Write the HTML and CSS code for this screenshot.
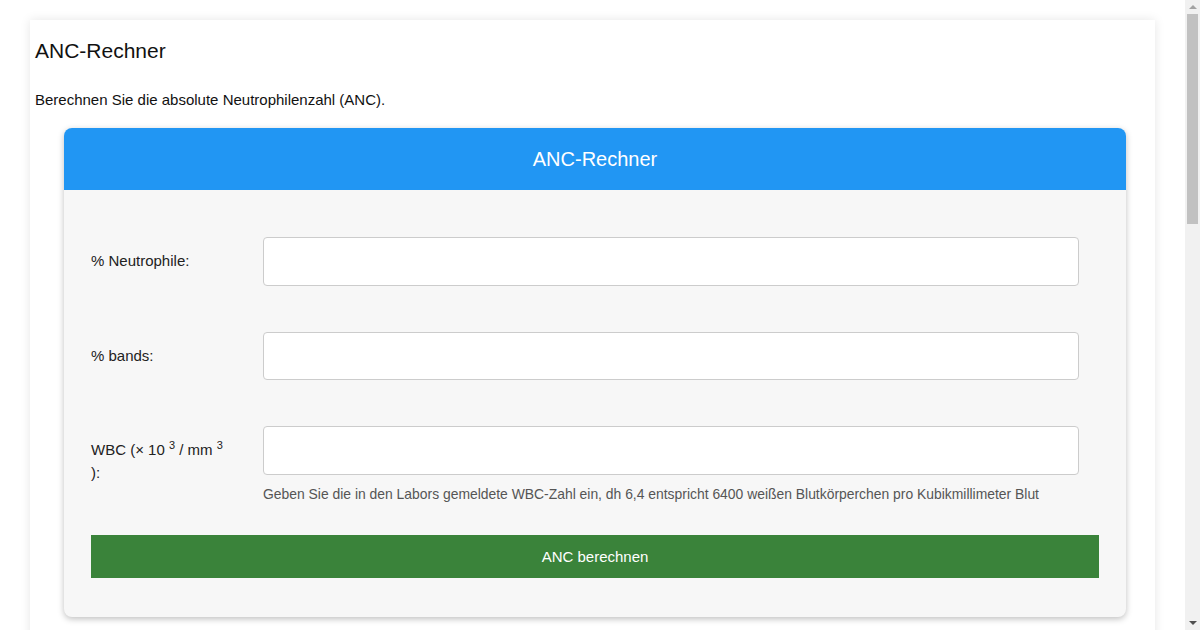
FILE: index.html
```html
<html lang="de">

<head>
    <meta charset="UTF-8">
    <meta name="viewport" content="width=device-width, initial-scale=1.0">
    <title>ANC-Rechner</title>
    <link rel="stylesheet" href="styles.css">
</head>

<body>
    <div class="page">
        <h1 class="page-title">ANC-Rechner</h1>
        <p class="intro">Berechnen Sie die absolute Neutrophilenzahl (ANC).</p>

        <div class="calc-card">
            <div class="calc-head">ANC-Rechner</div>
            <div class="calc-body">
                <div class="calc-row">
                    <label class="calc-label" for="neutro">% Neutrophile:</label>
                    <div class="calc-field">
                        <input id="neutro" class="calc-input" type="text">
                    </div>
                </div>
                <div class="calc-row">
                    <label class="calc-label" for="bands">% bands:</label>
                    <div class="calc-field">
                        <input id="bands" class="calc-input" type="text">
                    </div>
                </div>
                <div class="calc-row">
                    <label class="calc-label calc-label-tall" for="wbc">WBC (× 10 <sup>3</sup> / mm <sup>3</sup> ):</label>
                    <div class="calc-field">
                        <input id="wbc" class="calc-input" type="text">
                        <div class="calc-help">Geben Sie die in den Labors gemeldete WBC-Zahl ein, dh 6,4 entspricht 6400 weißen Blutkörperchen pro Kubikmillimeter Blut</div>
                    </div>
                </div>
                <button class="calc-btn" type="button">ANC berechnen</button>
            </div>
        </div>
    </div>

    <!-- page scrollbar as the browser shows it -->
    <div class="scrollbar">
        <span class="scroll-arrow up"></span>
        <div class="scroll-track"><div class="scroll-thumb"></div></div>
        <span class="scroll-arrow down"></span>
    </div>
</body>

</html>
```

FILE: styles.css
```css
body {
    margin: 0;
    padding: 0;
    background-color: #fff;
    font-family: "Liberation Sans", Arial, sans-serif;
    color: #111;
}

.page {
    width: 1125px;
    min-height: 1750px;
    margin: 20px 0 0 30px;
    padding: 5px;
    box-sizing: border-box;
    background-color: #fff;
    box-shadow: 0 0 10px rgba(0, 0, 0, .1);
}

.page-title {
    font-size: 21px;
    font-weight: normal;
    line-height: 24px;
    margin: 14px 0 28px;
}

.intro {
    font-size: 15px;
    line-height: 18px;
    margin: 0 0 19px;
}

.calc-card {
    margin: 0 24px 0 29px;
    border-radius: 8px;
    background-color: #f7f7f7;
    box-shadow: 0 2px 6px rgba(0, 0, 0, .25);
}

.calc-head {
    background-color: #2196f3;
    color: #fff;
    font-size: 20px;
    line-height: 24px;
    padding: 19px;
    text-align: center;
    border-radius: 8px 8px 0 0;
}

.calc-body {
    padding: 24px 27px 39px;
}

.calc-row {
    display: flex;
    align-items: center;
    padding: 23px 0;
}

.calc-label {
    flex: 0 0 172px;
    box-sizing: border-box;
    padding-right: 32px;
    padding-bottom: 1px;
    font-size: 15px;
    line-height: 23px;
    color: #222;
}

.calc-label-tall {
    padding-bottom: 8px;
}

.calc-label sup {
    font-size: 11px;
    line-height: 0;
}

.calc-field {
    flex: 1;
    margin-right: 20px;
}

.calc-input {
    display: block;
    width: 100%;
    height: 48.5px;
    box-sizing: border-box;
    border: 1px solid #ccc;
    border-radius: 4px;
    background-color: #fff;
    padding: 0 12px;
    font-size: 15px;
    font-family: inherit;
}

.calc-help {
    margin-top: 9px;
    font-size: 13.9px;
    line-height: 20px;
    color: #555;
}

.calc-btn {
    display: block;
    width: 100%;
    height: 43px;
    margin-top: 8px;
    border: none;
    background-color: #3a833a;
    color: #fff;
    font-size: 15px;
    font-family: inherit;
    cursor: pointer;
}

.scrollbar {
    position: fixed;
    top: 0;
    right: 0;
    bottom: 0;
    width: 15px;
    background-color: #f1f1f1;
    display: flex;
    flex-direction: column;
    align-items: center;
}

.scroll-track {
    flex: 1;
    width: 100%;
    padding: 0 2px;
    box-sizing: border-box;
}

.scroll-thumb {
    height: 210px;
    background-color: #c1c1c1;
}

.scroll-arrow {
    width: 0;
    height: 0;
    margin: 5px 0;
    border-left: 4px solid transparent;
    border-right: 4px solid transparent;
}

.scroll-arrow.up {
    border-bottom: 4px solid #a3a3a3;
}

.scroll-arrow.down {
    border-top: 4px solid #505050;
}
```
